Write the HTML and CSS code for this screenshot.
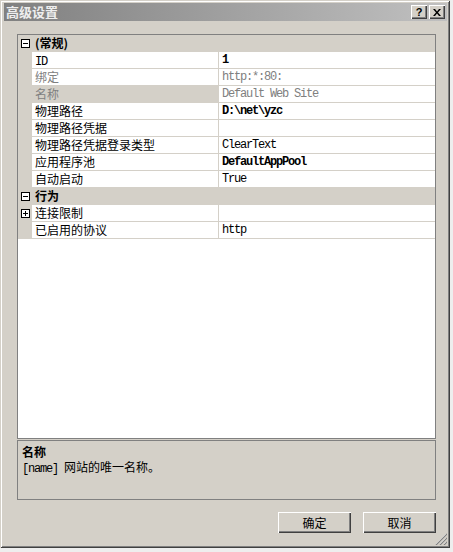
FILE: index.html
```html
<!DOCTYPE html>
<html>
<head>
<meta charset="utf-8">
<link rel="stylesheet" href="styles.css">
</head>
<body>
<div class="window">
  <div class="titlebar">
    <span class="title">高级设置</span>
    <div class="tbtns">
      <span class="tb help">?</span>
      <span class="tb close"><svg width="8" height="7" viewBox="0 0 8 7"><path d="M0 0h2l2 2.5L6 0h2L5 3.5 8 7H6L4 4.5 2 7H0l3-3.5z" fill="#000"/></svg></span>
    </div>
  </div>
  <div class="content">
    <div class="grid">
      <div class="row cat"><span class="margin"><i class="tog"></i></span><span class="catname">(常规)</span></div>
      <div class="row"><span class="margin"></span><span class="name"><span class="a">ID</span></span><span class="val a b">1</span></div>
      <div class="row ro"><span class="margin"></span><span class="name">绑定</span><span class="val a">http:*:80:</span></div>
      <div class="row ro sel"><span class="margin"></span><span class="name">名称</span><span class="val a">Default Web Site</span></div>
      <div class="row"><span class="margin"></span><span class="name">物理路径</span><span class="val a b">D:\net\yzc</span></div>
      <div class="row"><span class="margin"></span><span class="name">物理路径凭据</span><span class="val a"></span></div>
      <div class="row"><span class="margin"></span><span class="name">物理路径凭据登录类型</span><span class="val a">ClearText</span></div>
      <div class="row"><span class="margin"></span><span class="name">应用程序池</span><span class="val a b">DefaultAppPool</span></div>
      <div class="row"><span class="margin"></span><span class="name">自动启动</span><span class="val a">True</span></div>
      <div class="row cat"><span class="margin"><i class="tog"></i></span><span class="catname">行为</span></div>
      <div class="row"><span class="margin"><i class="tog plus"></i></span><span class="name">连接限制</span><span class="val a"></span></div>
      <div class="row"><span class="margin"></span><span class="name">已启用的协议</span><span class="val a">http</span></div>
    </div>
    <div class="desc">
      <div class="desc-title">名称</div>
      <div class="desc-text"><span class="a">[name] </span>网站的唯一名称。</div>
    </div>
    <div class="buttons">
      <span class="btn">确定</span>
      <span class="btn">取消</span>
    </div>
  </div>
  <svg class="grip" width="12" height="12" viewBox="0 0 12 12">
    <path d="M11 1L1 11M11 5L5 11M11 9L9 11" stroke="#fff" stroke-width="1"/>
    <path d="M12 1L1 12M12 5L5 12M12 9L9 12" stroke="#808080" stroke-width="1.2"/>
  </svg>
</div>
</body>
</html>
```
FILE: styles.css
```css
* { box-sizing: border-box; }
html, body { margin: 0; padding: 0; }
body {
  background: #eeeeee;
  font-family: "Noto Sans CJK SC", sans-serif;
  font-size: 12px;
  color: #000;
  width: 453px;
  height: 552px;
  overflow: hidden;
}
.window {
  position: relative;
  width: 450px;
  height: 548px;
  background: #d4d0c8;
  padding: 3px;
  box-shadow: inset 1px 1px #d4d0c8, inset -1px -1px #404040, inset 2px 2px #ffffff, inset -2px -2px #808080;
  display: flex;
  flex-direction: column;
}
.titlebar {
  height: 18px;
  margin-left: 1px;
  background: linear-gradient(to right, #808080, #c0c0c0);
  display: flex;
  align-items: center;
  justify-content: space-between;
  padding: 0 2px 0 2px;
}
.title {
  color: #eeeeee;
  font-weight: bold;
  font-size: 13px;
  line-height: 18px;
}
.tbtns { display: flex; gap: 2px; }
.tb {
  width: 16px;
  height: 14px;
  background: #d4d0c8;
  box-shadow: inset 1px 1px #ffffff, inset -1px -1px #404040, inset -2px -2px #808080;
  display: flex;
  align-items: center;
  justify-content: center;
  font-family: "Liberation Sans", sans-serif;
  font-weight: bold;
  font-size: 11px;
  line-height: 14px;
}
.content {
  flex: 1;
  display: flex;
  flex-direction: column;
  padding: 13px 12px 0 14px;
}
.grid {
  width: 419px;
  height: 405px;
  border: 1px solid #808080;
  background: #ffffff;
}
.row {
  display: grid;
  grid-template-columns: 14px 186px 217px;
  height: 17px;
  border-bottom: 1px solid #d4d0c8;
}
.margin {
  background: #d4d0c8;
  position: relative;
}
.tog {
  position: absolute;
  left: 3px;
  top: 4px;
  width: 9px;
  height: 9px;
  border: 1px solid #000;
  background: #fff;
}
.tog::before {
  content: "";
  position: absolute;
  left: 1px;
  top: 3px;
  width: 5px;
  height: 1px;
  background: #000;
}
.tog.plus::after {
  content: "";
  position: absolute;
  left: 3px;
  top: 1px;
  width: 1px;
  height: 5px;
  background: #000;
}
.cat { background: #d4d0c8; }
.catname {
  grid-column: 2 / 4;
  font-weight: bold;
  line-height: 16px;
  padding-left: 3px;
}
.name {
  padding-left: 3px;
  line-height: 16px;
  white-space: nowrap;
}
.val {
  border-left: 1px solid #d4d0c8;
  padding-left: 3px;
  line-height: 16px;
  white-space: nowrap;
}
.a {
  font-family: "Liberation Mono", monospace;
  font-size: 12px;
  letter-spacing: -1.2px;
}
.b { font-weight: bold; }
.ro .name, .ro .val { color: #808080; }
.sel .name { background: #d4d0c8; }
.desc {
  margin-top: 1px;
  width: 419px;
  height: 60px;
  border: 1px solid #808080;
  padding: 3px 4px;
}
.desc-title {
  font-weight: bold;
  line-height: 15px;
}
.desc-text { line-height: 16px; }
.buttons {
  display: flex;
  justify-content: flex-end;
  gap: 12px;
  margin-top: 12px;
  width: 419px;
}
.btn {
  width: 73px;
  height: 21px;
  background: #d4d0c8;
  box-shadow: inset 1px 1px #ffffff, inset -1px -1px #404040, inset -2px -2px #808080;
  display: flex;
  align-items: center;
  justify-content: center;
  line-height: 21px;
}
.grip {
  position: absolute;
  right: 3px;
  bottom: 3px;
}
```
